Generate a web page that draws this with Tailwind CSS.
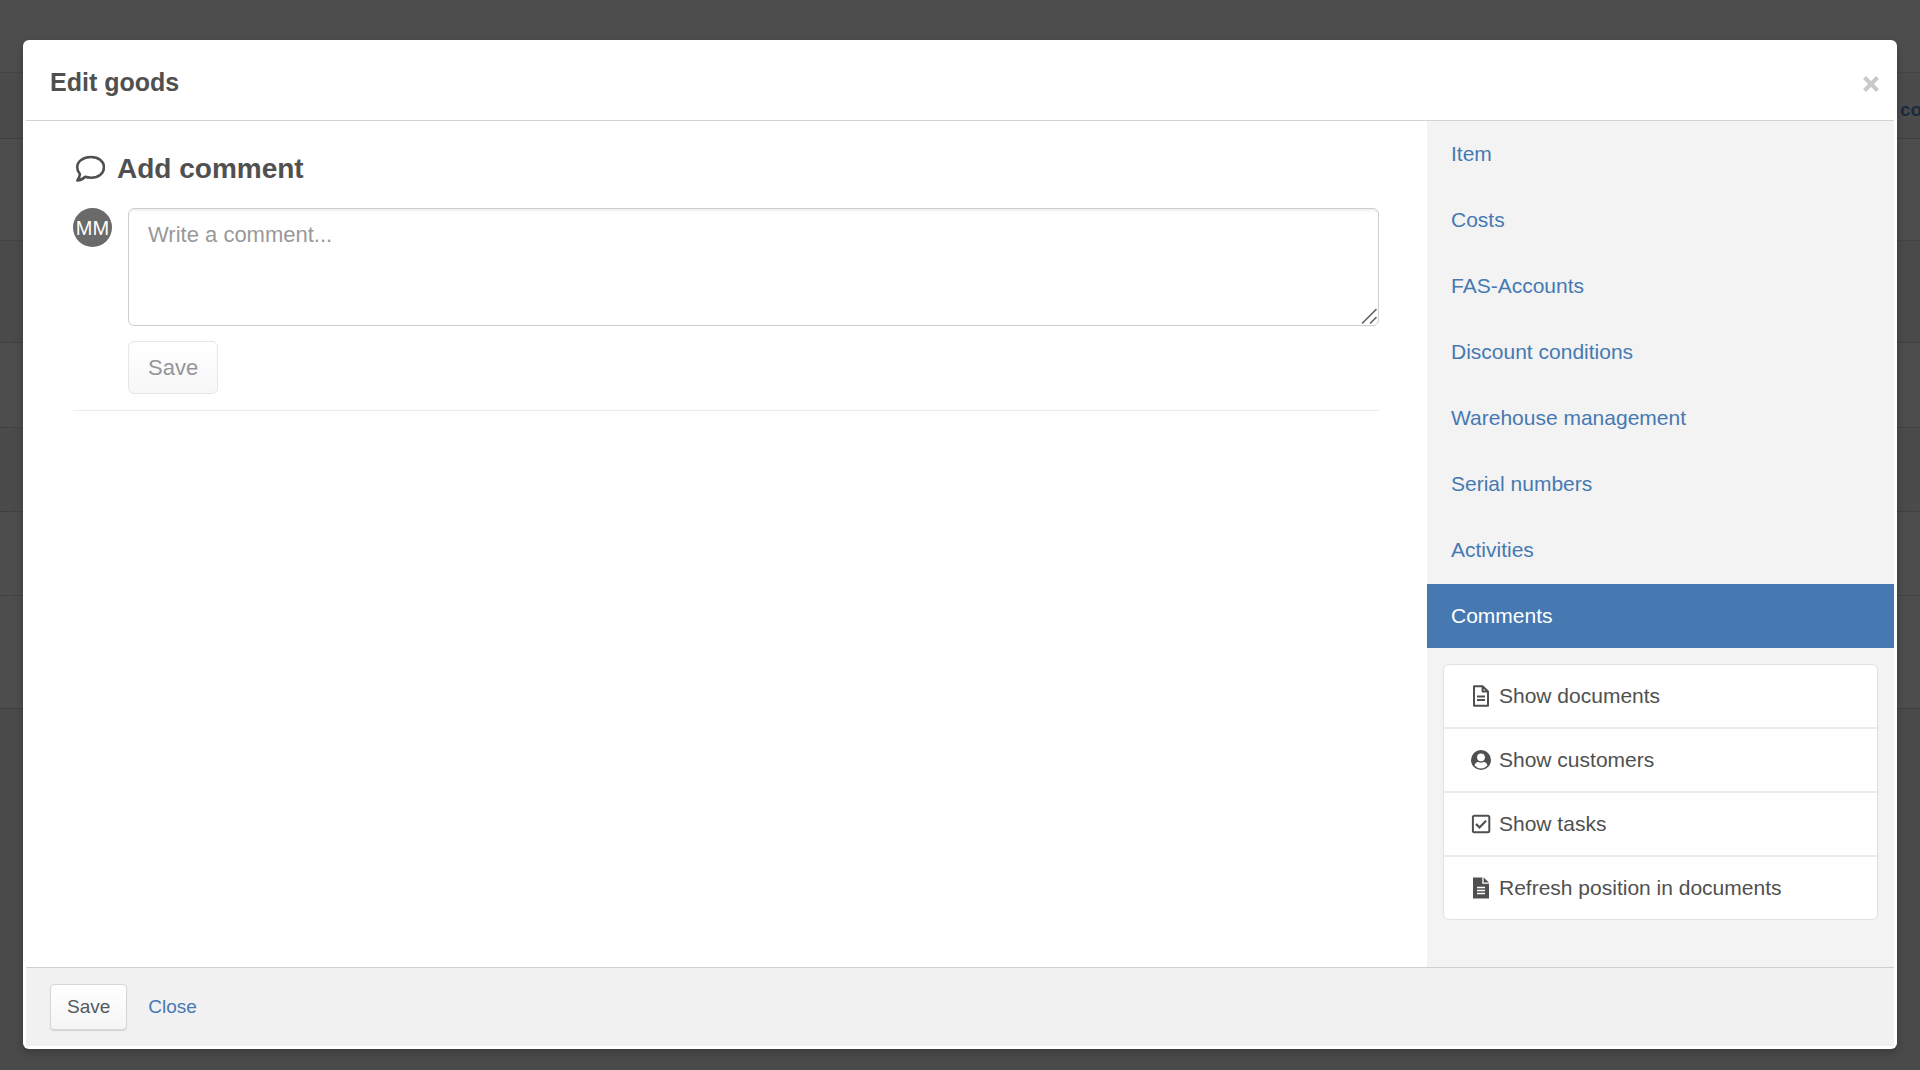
<!DOCTYPE html>
<html lang="en">
	<head>
		<meta charset="UTF-8" />
		<meta name="viewport" content="width=device-width, initial-scale=1.0" />
		<title>Edit goods</title>
		<script src="https://cdn.jsdelivr.net/npm/@tailwindcss/browser@4"></script>
	</head>
	<body
		class="relative h-screen overflow-hidden bg-[#4a4a4a] font-['Liberation_Sans',Arial,sans-serif] text-[21px] leading-6 text-[#505050]"
	>
		<!-- Dimmed page behind the dialog -->
		<div class="flex flex-col">
			<div class="h-[73px] border-b border-[#444] bg-[#4d4d4d]"></div>
			<div
				class="flex h-[66px] items-center justify-end border-b border-[#3e3e3e] bg-[#4b4b4b] pt-2"
			>
				<span class="w-5 text-[19px] font-bold text-[#1a2b40]">co</span>
			</div>
			<div class="h-[102px] border-b border-[#444] bg-[#4d4d4d]"></div>
			<div class="h-[102px] border-b border-dotted border-[#383838] bg-[#4a4a4a]"></div>
			<div class="h-[85px] border-b border-dotted border-[#383838] bg-[#4d4d4d]"></div>
			<div class="h-[84px] border-b border-dotted border-[#383838] bg-[#4b4b4b]"></div>
			<div class="h-[84px] border-b border-dotted border-[#383838] bg-[#4d4d4d]"></div>
			<div class="h-[113px] border-b border-[#3e3e3e] bg-[#4d4d4d]"></div>
		</div>

		<!-- Dialog -->
		<div class="absolute inset-0 flex px-[23px] pt-10 pb-[21px]">
			<div
				role="dialog"
				aria-labelledby="dialog-title"
				class="flex w-full flex-col rounded-md bg-white p-[3px] shadow-[0_4px_10px_rgba(0,0,0,0.2)]"
			>
				<header
					class="flex h-[78px] shrink-0 items-center justify-between border-b border-[#d3d3d3] pr-3 pl-6"
				>
					<h1 id="dialog-title" class="text-[25px] leading-8 font-bold">
						Edit goods
					</h1>
					<button type="button" aria-label="Close dialog" class="px-0.5 pt-1.5 pb-0.5">
						<svg class="size-[18px]" viewBox="0 0 18 18" stroke="#c9c9c9" stroke-width="4">
							<path d="M2.500 2.500l13 13M15.500 2.500l-13 13" />
						</svg>
					</button>
				</header>

				<div class="flex min-h-0 flex-1">
					<!-- Comment form -->
					<main class="flex-1 pt-8 pr-12 pl-[47px]">
						<h2 class="flex items-center gap-3 pl-0.5 text-[28px] leading-8 font-bold">
							<svg class="h-7 w-[30px]" viewBox="0 0 30 28" fill="none" stroke="#505050" stroke-width="2.6" stroke-linejoin="round">
								<path d="M16 2C23.800 2 29 6.500 29 12.300S23.800 22.700 16 22.700c-2.200 0-4-.3-5.700-.9C8 24 5.300 25.300 2.300 25.400c1.400-1.900 2.500-4 2.600-6.300C3.100 17.200 2.200 15 2.200 12.300 2.200 6.500 8 2 16 2z" />
							</svg>
							Add comment
						</h2>

						<form class="mt-[23px] flex gap-4 border-b border-[#ebebeb] pb-4">
							<div
								class="flex size-[39px] shrink-0 items-center justify-center rounded-full bg-[#6a6a6a] text-[20px] text-white"
							>
								MM
							</div>
							<div class="flex-1">
								<div class="relative">
									<textarea
										name="comment"
										aria-label="Comment"
										placeholder="Write a comment..."
										class="block h-[118px] w-full resize-none rounded-md border border-[#cfcfcf] px-[19px] py-3 text-[22px] leading-7 shadow-[inset_0_2px_2px_rgba(0,0,0,0.06)] placeholder:text-[#999]"
									></textarea>
									<svg class="pointer-events-none absolute right-0.5 bottom-0.5 size-4" viewBox="0 0 16 16" stroke="#666" stroke-width="1.6">
										<path d="M1 15.500L15.500 1M9 15.500L15.500 9" />
									</svg>
								</div>
								<button
									type="button"
									disabled
									class="mt-[15px] h-[53px] rounded-md border border-[#e6e6e6] bg-linear-to-b from-white to-[#f7f7f7] px-[19px] text-[22px] text-[#939699]"
								>
									Save
								</button>
							</div>
						</form>
					</main>

					<!-- Side navigation -->
					<aside class="w-[467px] bg-[#f3f3f3] pt-px">
						<nav class="flex flex-col gap-0.5 text-[#4679b2]">
							<a href="#" class="flex h-16 items-center px-6">Item</a>
							<a href="#" class="flex h-16 items-center px-6">Costs</a>
							<a href="#" class="flex h-16 items-center px-6">FAS-Accounts</a>
							<a href="#" class="flex h-16 items-center px-6">Discount conditions</a>
							<a href="#" class="flex h-16 items-center px-6">Warehouse management</a>
							<a href="#" class="flex h-16 items-center px-6">Serial numbers</a>
							<a href="#" class="flex h-16 items-center px-6">Activities</a>
							<a href="#" aria-current="page" class="flex h-16 items-center bg-[#4679b2] px-6 text-white">Comments</a>
						</nav>

						<ul class="m-4 divide-y-2 divide-[#ebebeb] rounded-md border border-[#e1e1e1] bg-white">
							<li>
								<a href="#" class="flex h-[62px] items-center gap-[7px] pl-[26px]">
									<svg class="size-[22px]" viewBox="0 0 22 22" fill="none" stroke="#505050" stroke-width="2" stroke-linejoin="round">
										<path d="M4 1.300h8.600L18 6.500v14.200H4zM12.600 1.300v5.200H18M7 11.500h8M7 15h8" />
									</svg>
									Show documents
								</a>
							</li>
							<li>
								<a href="#" class="flex h-[62px] items-center gap-[7px] pl-[26px]">
									<svg class="size-[22px]" viewBox="0 0 22 22">
										<circle cx="11" cy="11" r="10" fill="#505050" />
										<circle cx="11" cy="8.300" r="3.900" fill="white" />
										<path d="M4.600 16.600c.5-2.600 2-3.700 3.900-3.700 1.600.8 3.400.8 5 0 1.900 0 3.400 1.100 3.900 3.700a8.500 8.500 0 0 1-12.800 0z" fill="white" />
									</svg>
									Show customers
								</a>
							</li>
							<li>
								<a href="#" class="flex h-[62px] items-center gap-[7px] pl-[26px]">
									<svg class="size-[22px]" viewBox="0 0 22 22" fill="none" stroke="#505050">
										<rect x="2.900" y="2.700" width="16.400" height="16.600" rx="1.500" stroke-width="2" />
										<path d="M6 11l3.500 3.400 6.500-6.600" stroke-width="2.200" />
									</svg>
									Show tasks
								</a>
							</li>
							<li>
								<a href="#" class="flex h-[62px] items-center gap-[7px] pl-[26px]">
									<svg class="size-[22px]" viewBox="0 0 22 22" fill="#505050">
										<path d="M3 .500h9.300v6.300H19v14.700H3zM13.600.500L19 5.500h-5.400z" />
										<path d="M7 10.500h8M7 13.500h8M7 16.500h8" stroke="white" stroke-width="1.300" />
									</svg>
									Refresh position in documents
								</a>
							</li>
						</ul>
					</aside>
				</div>

				<footer
					class="flex shrink-0 items-center gap-[21px] border-t border-[#cfcfcf] bg-[#f1f1f1] px-6 py-4 text-[19px]"
				>
					<button
						type="submit"
						class="h-[46px] rounded border border-[#d6d6d6] bg-linear-to-b from-white to-[#f5f5f5] px-4 text-[#55595c] shadow-[0_1px_1px_rgba(0,0,0,0.12)]"
					>
						Save
					</button>
					<a href="#" class="text-[#4679b2]">Close</a>
				</footer>
			</div>
		</div>
	</body>
</html>
